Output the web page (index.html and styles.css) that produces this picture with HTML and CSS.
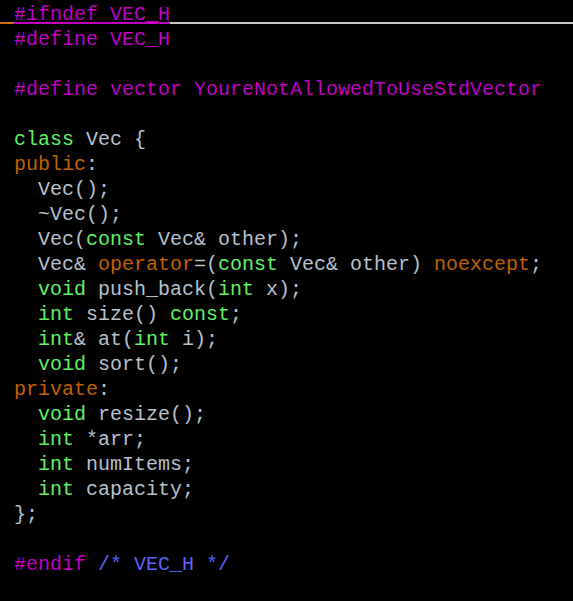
FILE: index.html
```html
<!DOCTYPE html>
<html>
<head>
<meta charset="utf-8">
<link rel="stylesheet" href="styles.css">
</head>
<body>
<div class="code">
<div class="line cur"><span class="gut"></span><span class="pp curtext">#ifndef VEC_H</span><span class="rest"></span></div>
<div class="line"><span class="pp">#define VEC_H</span></div>
<div class="line"> </div>
<div class="line"><span class="pp">#define vector YoureNotAllowedToUseStdVector</span></div>
<div class="line"> </div>
<div class="line"><span class="kw">class</span> Vec {</div>
<div class="line"><span class="acc">public</span>:</div>
<div class="line">  Vec();</div>
<div class="line">  ~Vec();</div>
<div class="line">  Vec(<span class="kw">const</span> Vec&amp; other);</div>
<div class="line">  Vec&amp; <span class="acc">operator</span>=(<span class="kw">const</span> Vec&amp; other) <span class="acc">noexcept</span>;</div>
<div class="line">  <span class="kw">void</span> push_back(<span class="kw">int</span> x);</div>
<div class="line">  <span class="kw">int</span> size() <span class="kw">const</span>;</div>
<div class="line">  <span class="kw">int</span>&amp; at(<span class="kw">int</span> i);</div>
<div class="line">  <span class="kw">void</span> sort();</div>
<div class="line"><span class="acc">private</span>:</div>
<div class="line">  <span class="kw">void</span> resize();</div>
<div class="line">  <span class="kw">int</span> *arr;</div>
<div class="line">  <span class="kw">int</span> numItems;</div>
<div class="line">  <span class="kw">int</span> capacity;</div>
<div class="line">};</div>
<div class="line"> </div>
<div class="line"><span class="pp">#endif</span> <span class="cm">/* VEC_H */</span></div>
</div>
</body>
</html>
```
FILE: styles.css
```css
html, body {
  margin: 0;
  padding: 0;
  background: #000;
}
.code {
  padding-top: 1.5px;
  font-family: "Liberation Mono", monospace;
  font-size: 20px;
  line-height: 25px;
  color: #b8c0cc;
}
.line {
  white-space: pre;
  height: 25px;
  padding-left: 14px;
}
.line.cur {
  display: flex;
  padding-left: 0;
}
.gut {
  width: 14px;
  flex: none;
  background: linear-gradient(to bottom, transparent 20px, #d07000 20px, #d07000 22px, transparent 22px);
}
.curtext {
  background: linear-gradient(to bottom, transparent 20px, #c000c0 20px, #c000c0 22px, transparent 22px);
}
.rest {
  flex: 1;
  background: linear-gradient(to bottom, transparent 20.5px, #c8c8c8 20.5px, #c8c8c8 22px, transparent 22px);
}
.pp { color: #c000c0; }
.kw { color: #60f060; }
.acc { color: #c06000; }
.cm { color: #5c60f8; }
```
